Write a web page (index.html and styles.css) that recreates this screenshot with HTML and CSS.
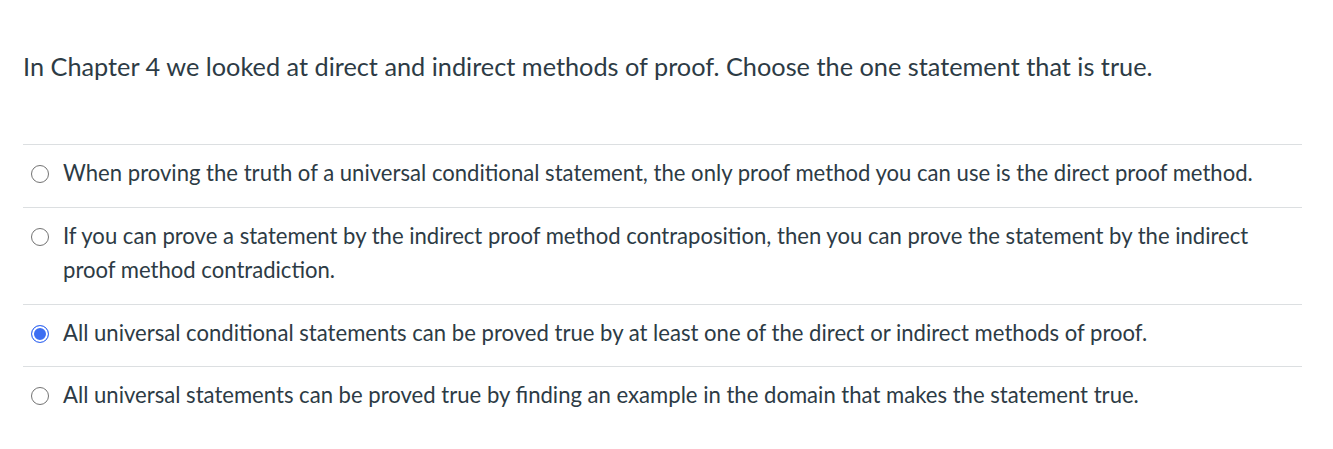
FILE: index.html
```html
<!DOCTYPE html>
<html>
<head>
<meta charset="utf-8">
<link rel="stylesheet" href="styles.css">
</head>
<body>
<div class="question">
  <div class="prompt">In Chapter 4 we looked at direct and indirect methods of proof. Choose the one statement that is true.</div>
  <div class="answers">
    <label class="answer"><span class="radio"></span><span class="text">When proving the truth of a universal conditional statement, the only proof method you can use is the direct proof method.</span></label>
    <label class="answer"><span class="radio"></span><span class="text">If you can prove a statement by the indirect proof method contraposition, then you can prove the statement by the indirect proof method contradiction.</span></label>
    <label class="answer"><span class="radio checked"></span><span class="text">All universal conditional statements can be proved true by at least one of the direct or indirect methods of proof.</span></label>
    <label class="answer"><span class="radio"></span><span class="text">All universal statements can be proved true by finding an example in the domain that makes the statement true.</span></label>
  </div>
</div>
</body>
</html>
```
FILE: styles.css
```css
html, body { margin: 0; padding: 0; background: #fff; }
body { font-family: Lato, "Open Sans", sans-serif; color: #2d3b45; }
.question { width: 1279px; padding: 48px 0 0 23px; }
.prompt { font-size: 25.3px; line-height: 36px; padding-bottom: 60px; border-bottom: 1px solid #dcdfe1; }
.answers { display: flex; flex-direction: column; }
.answer { display: flex; align-items: flex-start; padding: 11px 30px 16px 8px; border-bottom: 1px solid #dcdfe1; font-size: 22.1px; line-height: 34.5px; }
.answer:last-child { border-bottom: none; }
.radio { flex: none; width: 18px; height: 18px; border: 1.5px solid #737373; border-radius: 50%; margin: 9px 14px 0 0; box-sizing: border-box; background: #fff; }
.radio.checked { border: 1.5px solid #3d6ef2; background: #3d6ef2; box-shadow: inset 0 0 0 2px #fff; }
```
